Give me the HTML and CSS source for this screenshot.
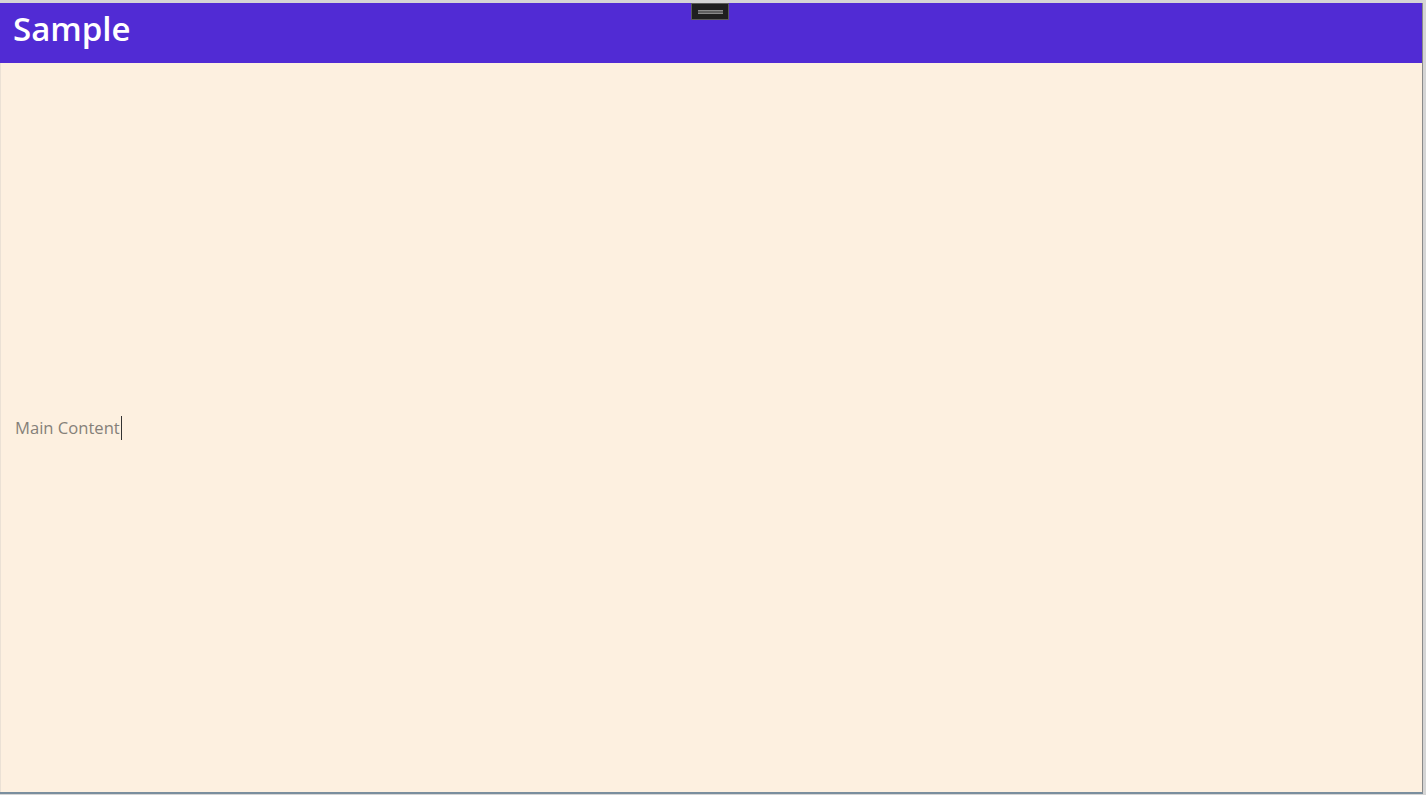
FILE: index.html
```html
<!DOCTYPE html>
<html>
<head>
<meta charset="utf-8">
<link rel="stylesheet" href="styles.css">
</head>
<body>
<div class="frame">
  <div class="window">
    <header class="titlebar">
      <h1 class="title">Sample</h1>
      <div class="grabber"><span class="grip"></span></div>
    </header>
    <main class="content">
      <span class="label">Main Content</span><span class="caret"></span>
    </main>
  </div>
</div>
</body>
</html>
```
FILE: styles.css
```css
html, body {
  margin: 0;
  padding: 0;
}
body {
  width: 1426px;
  height: 795px;
  overflow: hidden;
  background: #d5d5d5;
  font-family: "Open Sans", "Noto Sans", sans-serif;
}
.frame {
  height: 795px;
  box-sizing: border-box;
  padding-top: 3px;
  padding-right: 3px;
  padding-bottom: 1px;
  display: flex;
  flex-direction: column;
}
.window {
  flex: 1;
  display: flex;
  flex-direction: column;
  border-right: 1px solid #8a8a8a;
  border-bottom: 2px solid #7a8e9e;
}
.titlebar {
  position: relative;
  height: 60px;
  background: #512bd4;
  display: flex;
  align-items: center;
  padding-left: 13px;
}
.title {
  margin: 0;
  color: #ffffff;
  font-size: 33px;
  font-weight: 600;
  line-height: 1;
  margin-top: -9px;
  letter-spacing: 0;
}
.grabber {
  position: absolute;
  left: 691px;
  top: 0;
  width: 36px;
  height: 15px;
  background: #1f1f1f;
  border: 1px solid #5a5a5a;
  display: flex;
  align-items: center;
  justify-content: center;
}
.grip {
  display: block;
  width: 25px;
  height: 2px;
  border-top: 1px solid #8a8a8a;
  border-bottom: 1px solid #8a8a8a;
  background: #5e5e5e;
}
.content {
  flex: 1;
  background: #fdf0e0;
  border-left: 1px solid #ebe1d5;
  display: flex;
  align-items: center;
  padding-left: 14px;
}
.label {
  color: #858079;
  font-size: 16.6px;
  line-height: 24px;
}
.caret {
  display: inline-block;
  width: 1px;
  height: 24px;
  background: #333333;
  margin-left: 1px;
}
```
